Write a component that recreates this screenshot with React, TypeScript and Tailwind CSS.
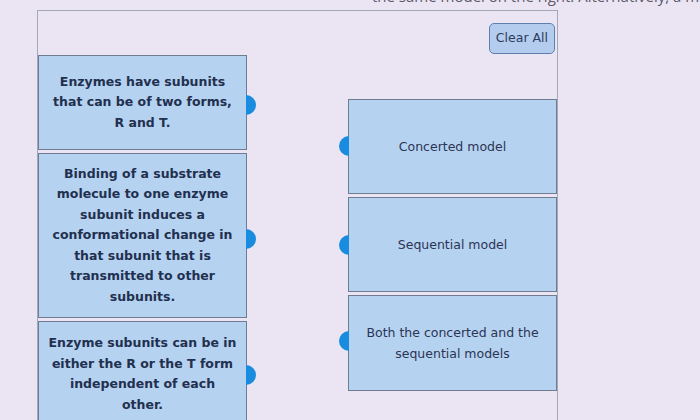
import React from "react"

type Card = { text: string[]; h: string; dot: string }

const leftCards: Card[] = [
  { text: ["Enzymes have subunits", "that can be of two forms,", "R and T."], h: "h-[95px]", dot: "top-[39px]" },
  {
    text: [
      "Binding of a substrate",
      "molecule to one enzyme",
      "subunit induces a",
      "conformational change in",
      "that subunit that is",
      "transmitted to other",
      "subunits.",
    ],
    h: "h-[165px]",
    dot: "top-[75px]",
  },
  { text: ["Enzyme subunits can be in", "either the R or the T form", "independent of each", "other."], h: "h-[106px]", dot: "top-[43px]" },
]

const rightCards: Card[] = [
  { text: ["Concerted model"], h: "h-[95px]", dot: "top-[36px]" },
  { text: ["Sequential model"], h: "h-[95px]", dot: "top-[37px]" },
  { text: ["Both the concerted and the", "sequential models"], h: "h-[96px]", dot: "top-[35px]" },
]

function Dot({ side, pos }: { side: "left" | "right"; pos: string }) {
  if (side === "right") {
    return <span className={`absolute left-full h-[20px] w-[10px] rounded-r-full bg-[#1a8ce0] ${pos}`} />
  }
  return <span className={`absolute right-full h-[20px] w-[10px] rounded-l-full bg-[#1a8ce0] ${pos}`} />
}

export default function App() {
  return (
    <div className="h-[420px] w-[700px] overflow-hidden bg-[#ebe5f3] font-['DejaVu_Sans',Verdana,sans-serif]">
      <p className="-mt-[13px] h-[18px] whitespace-nowrap pl-[372px] font-['Open_Sans',sans-serif] text-[15px] leading-[18px] text-[#5b5a6a]">
        the same model on the right. Alternatively, a model on the
      </p>

      <div className="ml-[37px] mt-[5px] w-[521px] border-l border-r border-t border-[#a3a9ba] pb-10">
        <div className="flex h-[44px] items-start justify-end pr-[2px] pt-[12px]">
          <button className="h-[31px] rounded-[5px] border border-[#5f7fae] bg-[#b4cdef] px-[6px] text-[12.5px] text-[#2d3b5c]">
            Clear All
          </button>
        </div>

        <div className="flex justify-between">
          <div className="flex w-[209px] flex-col gap-[3px]">
            {leftCards.map((c, i) => (
              <div
                key={i}
                className={`relative flex flex-col items-center justify-center border border-[#6f7c92] bg-[#b6d2f1] text-center text-[12.5px] font-bold leading-[20.5px] text-[#22304f] ${c.h}`}
              >
                {c.text.map((t) => (
                  <span key={t}>{t}</span>
                ))}
                <Dot side="right" pos={c.dot} />
              </div>
            ))}
          </div>

          <div className="mt-[44px] flex w-[209px] flex-col gap-[3px]">
            {rightCards.map((c, i) => (
              <div
                key={i}
                className={`relative flex flex-col items-center justify-center border border-[#6f7c92] bg-[#b6d2f1] text-center text-[12.5px] leading-[21px] text-[#2a3553] ${c.h}`}
              >
                {c.text.map((t) => (
                  <span key={t}>{t}</span>
                ))}
                <Dot side="left" pos={c.dot} />
              </div>
            ))}
          </div>
        </div>
      </div>
    </div>
  )
}
